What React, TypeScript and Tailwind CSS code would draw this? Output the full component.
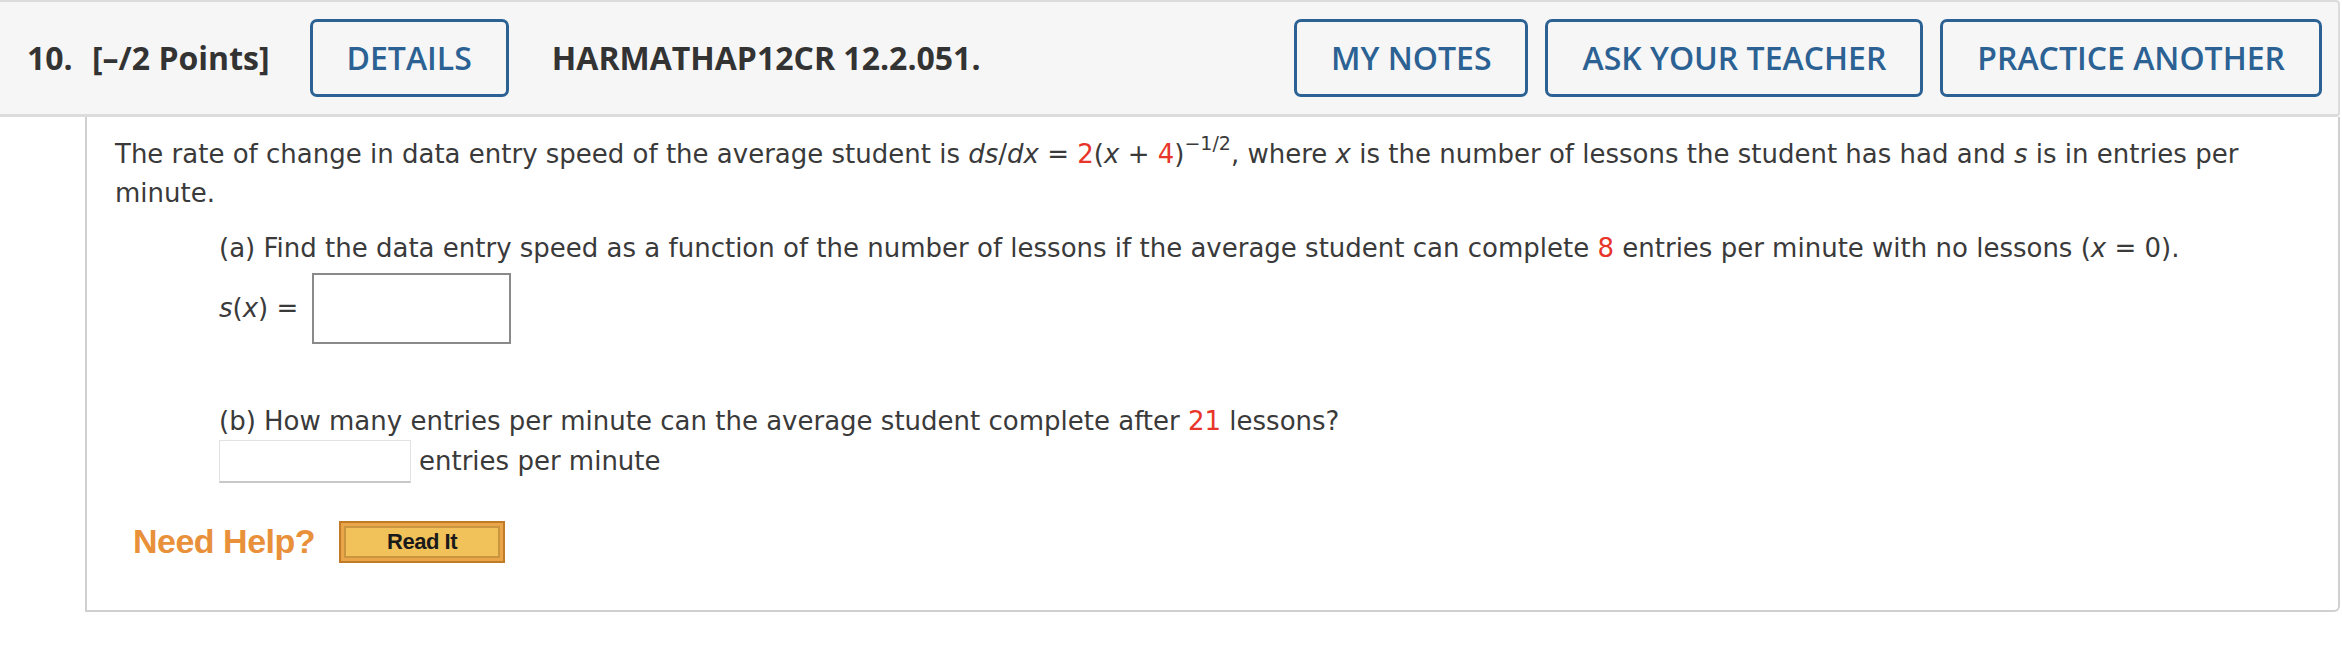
import React from "react";

const red = "text-[#e8352a]";

function HeaderButton({ children }: { children: React.ReactNode }) {
  return (
    <div className="h-[78px] flex items-center justify-center px-[34px] border-[3px] border-[#2b6193] rounded-[7px] text-[#2b6193] text-[32px] font-semibold whitespace-nowrap">
      {children}
    </div>
  );
}

export default function App() {
  return (
    <div className="w-[2342px] h-[648px] bg-white">
      <div className="w-[2340px] font-['Open_Sans',sans-serif]">
        {/* Header */}
        <div className="h-[117px] bg-[#f6f6f6] border-t-2 border-b-[3px] border-r-2 border-[#dcdcdc] rounded-tr-[4px] rounded-br-[4px] flex items-center pl-[27px] pr-[16px] text-[#333333]">
          <span className="text-[32px] font-bold w-[65px]">10.</span>
          <span className="text-[32px] font-bold">[–/2 Points]</span>
          <div className="ml-[40px]">
            <HeaderButton>DETAILS</HeaderButton>
          </div>
          <span className="ml-[43px] text-[32px] font-bold">HARMATHAP12CR 12.2.051.</span>
          <div className="ml-auto flex gap-[17px]">
            <HeaderButton>MY NOTES</HeaderButton>
            <HeaderButton>ASK YOUR TEACHER</HeaderButton>
            <HeaderButton>PRACTICE ANOTHER</HeaderButton>
          </div>
        </div>

        {/* Content panel */}
        <div className="ml-[85px] h-[495px] border-l-2 border-r-2 border-b-2 border-[#d0d0d0] rounded-br-[6px] pt-[18px] pl-[28px] pr-[30px] text-[#3a3a3a] text-[26px] font-['DejaVu_Sans','Verdana',sans-serif]">
          <p className="leading-[39px]">
            The rate of change in data entry speed of the average student is <i>ds</i>/<i>dx</i> ={" "}
            <span className={red}>2</span>(<i>x</i> + <span className={red}>4</span>)
            <sup className="text-[19px] relative top-[-13px]">−1/2</sup>, where <i>x</i> is the number of lessons the
            student has had and <i>s</i> is in entries per
            <br />
            minute.
          </p>

          <div className="pl-[104px]">
            <p className="mt-[16px] leading-[39px]">
              (a) Find the data entry speed as a function of the number of lessons if the average student can complete{" "}
              <span className={red}>8</span> entries per minute with no lessons (<i>x</i> = 0).
            </p>
            <div className="mt-[5px] flex items-center">
              <span className="w-[93px] whitespace-nowrap">
                <i>s</i>(<i>x</i>) =
              </span>
              <div className="w-[199px] h-[71px] border-2 border-[#8a8a8a] bg-white"></div>
            </div>

            <p className="mt-[59px] leading-[37px]">
              (b) How many entries per minute can the average student complete after{" "}
              <span className={red}>21</span> lessons?
            </p>
            <div className="flex items-center">
              <div className="w-[192px] h-[43px] border border-[#e2e2e2] border-b-2 border-b-[#c8c8c8] bg-white"></div>
              <span className="ml-[8px]">entries per minute</span>
            </div>
          </div>

          <div className="mt-[33px] ml-[18px] flex items-center">
            <span className="text-[34px] font-bold text-[#e8913a] font-['Liberation_Sans',Arial,sans-serif] tracking-[-0.5px]">
              Need Help?
            </span>
            <div className="ml-[24px] w-[166px] h-[42px] border-2 border-[#c07a28] bg-[#eba549] p-[3px]">
              <div className="w-full h-full border-2 border-[#c9963f] bg-[#f1c15a] flex items-center justify-center">
                <span className="text-[22px] font-bold text-[#1a1a1a] font-['Liberation_Sans',Arial,sans-serif] tracking-[-0.5px]">
                  Read It
                </span>
              </div>
            </div>
          </div>
        </div>
      </div>
    </div>
  );
}
